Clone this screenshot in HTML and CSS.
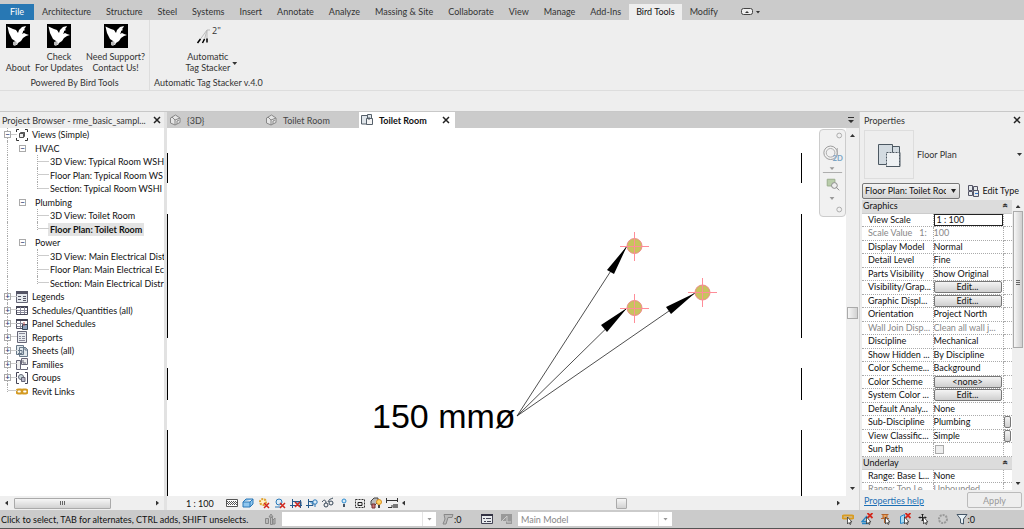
FILE: index.html
```html
<!DOCTYPE html>
<html lang="en">
<head>
<meta charset="utf-8">
<title>Bird Tools - Floor Plan: Toilet Room</title>
<link rel="stylesheet" href="styles.css">
</head>
<body>
<svg class="defs" aria-hidden="true">
  <symbol id="bird" viewBox="0 0 24 24"><path fill="#000" d="M0 0h24v24H0z"/><path fill="#fff" d="M1.500 2.500L7 5l3 1 2 3 1-3 3-3 4-1-1 2-1 1 1 1-2 1v1l-1 2 2-1 2 1 3 1-3 1-3 2-2 3-3 2-1 2H8l1-4-3-2-1-2-1-2-1-2z"/><path fill="#bbb" d="M7 18l3-1 1 3-2 2-2-1z"/></symbol>
  <symbol id="house" viewBox="0 0 12 12"><path fill="#e4e4e4" stroke="#888" d="M1.500 4l5-3 4.500 3v4.500L6 11 1.500 9z"/><path fill="none" stroke="#888" d="M1 5l2-2 3 3v5M6 6l5-2M8 10V7l2-1"/></symbol>
  <symbol id="plan" viewBox="0 0 12 12"><path fill="#dfe5ea" stroke="#56606a" d="M.5 1.500h6V10h-6zM6.500.5h4v4h-4z"/><path fill="#f4f4f4" stroke="#56606a" d="M5.500 4.500h6v6h-6z"/><path stroke="#56606a" stroke-dasharray="1 1" d="M8 3v4"/></symbol>
  <symbol id="close" viewBox="0 0 8 8"><path stroke="#222" stroke-width="1.500" d="M1 1l6 6M7 1L1 7"/></symbol>
  <symbol id="views" viewBox="0 0 12 12"><path fill="none" stroke="#333" d="M3 .5H.5V3M9 .5h2.500V3M3 11.500H.5V9M9 11.500h2.500V9"/><path fill="#eee" stroke="#555" d="M3.500 4.500l1-1h4v4l-1 1h-4zM3.500 4.500h4v4M7.500 4.500l1-1"/></symbol>
  <symbol id="legend" viewBox="0 0 12 12"><path fill="#e6eaee" stroke="#667" d="M.5.500h11v11H.5z"/><path fill="#556" d="M0 0h12v3H0z"/><path stroke="#556" d="M2 5.500h3M7 5.500h3M2 8.500h3M7 7.500h3M7 9.500h3"/></symbol>
  <symbol id="schedule" viewBox="0 0 12 12"><path fill="#fff" stroke="#445" d="M.5 2.500h11v8H.5z"/><path stroke="#445" d="M0 3h12" stroke-width="2"/><path stroke="#889" d="M1 6.500h10M1 8.500h10M4.500 3v7M8.500 3v7"/></symbol>
  <symbol id="panel" viewBox="0 0 12 12"><path fill="#fff" stroke="#556" d="M.5 1.500h11v9H.5z"/><path stroke="#445" stroke-width="2" d="M0 2h12"/><path stroke="#889" d="M1 5.500h6M1 8.500h6M4.500 3v7"/><path fill="#8fa3bd" stroke="#345" d="M6.500 6.500h5v5h-5z"/><path stroke="#b55" d="M8 4v4"/></symbol>
  <symbol id="report" viewBox="0 0 12 12"><path fill="#e9edf0" stroke="#667" d="M1.500.5h9v11h-9z"/><path stroke="#889" d="M3 2.500h6M3 5.500h2M6 5.500h3M3 7.500h2M6 7.500h3M3 9.500h6"/></symbol>
  <symbol id="sheet" viewBox="0 0 12 12"><path fill="#e1e8ec" stroke="#678" d="M.5.5h7v9h-7zM3.500 2.500h6l2 2v7h-8z"/><path fill="none" stroke="#678" d="M9 2v3h3M2 5.500h4v3H2"/></symbol>
  <symbol id="family" viewBox="0 0 12 12"><path fill="#eee" stroke="#667" d="M.5 2.500h4v9h-4zM5.500.5h6v6h-6z"/><path fill="none" stroke="#667" d="M5 11.500h6.500V9M7 2v3h3"/></symbol>
  <symbol id="group" viewBox="0 0 12 12"><path fill="none" stroke="#445" d="M3 .5H.5v11H3M9 .5h2.500v11H9"/><circle cx="5" cy="5" r="2.500" fill="#cdd" stroke="#667"/><path fill="#bbc" stroke="#667" d="M5.500 5.500h3.500v4H5.500z"/></symbol>
  <symbol id="link" viewBox="0 0 12 12"><path fill="none" stroke="#d39a22" stroke-width="2" d="M5 4.500H2.500a1.800 1.800 0 000 4H5L7 4.500h2.500a1.800 1.800 0 010 4H7z"/></symbol>
  <symbol id="cursor" viewBox="0 0 12 12"><path fill="#fff" stroke="#333" stroke-width=".8" d="M5.500 4v7l1.500-1.500 1 2 1-.5-1-2h2z"/></symbol>
  <symbol id="redx" viewBox="0 0 12 12"><path stroke="#d3271c" stroke-width="1.800" d="M6.500 0l5 5M11.500 0l-5 5"/></symbol>
</svg>

<header class="ribbon">
  <nav class="tabs" aria-label="Ribbon tabs">
    <button class="tab file">File</button>
    <button class="tab">Architecture</button>
    <button class="tab">Structure</button>
    <button class="tab">Steel</button>
    <button class="tab">Systems</button>
    <button class="tab">Insert</button>
    <button class="tab">Annotate</button>
    <button class="tab">Analyze</button>
    <button class="tab">Massing &amp; Site</button>
    <button class="tab">Collaborate</button>
    <button class="tab">View</button>
    <button class="tab">Manage</button>
    <button class="tab">Add-Ins</button>
    <button class="tab current">Bird Tools</button>
    <button class="tab">Modify</button>
    <button class="cycle" aria-label="Minimize ribbon"><svg width="20" height="8" viewBox="0 0 20 8"><rect x=".5" y=".5" width="11" height="6" rx="2" fill="#eee" stroke="#444"/><path fill="#333" d="M4 5l2-2 2 2zM15 3h4l-2 2.500z"/></svg></button>
  </nav>
  <div class="groups">
    <section class="group powered">
      <div class="tools">
        <button class="tool about"><svg class="big"><use href="#bird"/></svg><span class="single">About</span></button>
        <button class="tool updates"><svg class="big"><use href="#bird"/></svg><span>Check<br>For Updates</span></button>
        <button class="tool support"><svg class="big"><use href="#bird"/></svg><span>Need Support?<br>Contact Us!</span></button>
      </div>
      <h2>Powered By Bird Tools</h2>
    </section>
    <section class="group stacker">
      <div class="tools">
        <button class="tool tag-tool"><svg class="big" viewBox="0 0 24 24"><path fill="none" stroke="#bbb" d="M14 6h-3L3 17M11 6L8 17M11 6v10"/><path stroke="#000" stroke-width="1.500" d="M1.500 19l3-4M6.500 19l2-4M11 18.500v-4"/><text x="16" y="10" class="inch">2"</text></svg><span>Automatic<br>Tag Stacker</span></button>
        <i class="caret"></i>
      </div>
      <h2>Automatic Tag Stacker v.4.0</h2>
    </section>
  </div>
  <div class="options"></div>
</header>

<main class="work">
  <aside class="browser">
    <div class="title"><span>Project Browser - rme_basic_sampl...</span><button class="x" aria-label="Close browser"><svg><use href="#close"/></svg></button></div>
    <ul class="tree">
      <li class="l0"><b class="box">−</b><svg><use href="#views"/></svg>Views (Simple)</li>
      <li class="l1"><b class="box">−</b>HVAC</li>
      <li class="l2">3D View: Typical Room WSH</li>
      <li class="l2">Floor Plan: Typical Room WS</li>
      <li class="l2 end">Section: Typical Room WSHI</li>
      <li class="l1"><b class="box">−</b>Plumbing</li>
      <li class="l2">3D View: Toilet Room</li>
      <li class="l2 end"><strong>Floor Plan: Toilet Room</strong></li>
      <li class="l1"><b class="box">−</b>Power</li>
      <li class="l2">3D View: Main Electrical Dist</li>
      <li class="l2">Floor Plan: Main Electrical Ec</li>
      <li class="l2 end">Section: Main Electrical Distr</li>
      <li class="l0"><b class="box">+</b><svg><use href="#legend"/></svg>Legends</li>
      <li class="l0"><b class="box">+</b><svg><use href="#schedule"/></svg>Schedules/Quantities (all)</li>
      <li class="l0"><b class="box">+</b><svg><use href="#panel"/></svg>Panel Schedules</li>
      <li class="l0"><b class="box">+</b><svg><use href="#report"/></svg>Reports</li>
      <li class="l0"><b class="box">+</b><svg><use href="#sheet"/></svg>Sheets (all)</li>
      <li class="l0"><b class="box">+</b><svg><use href="#family"/></svg>Families</li>
      <li class="l0"><b class="box">+</b><svg><use href="#group"/></svg>Groups</li>
      <li class="l0 end"><b class="box none"></b><svg><use href="#link"/></svg>Revit Links</li>
    </ul>
    <div class="hbar"><i class="left"></i><span class="thumb grip"></span><i class="right"></i></div>
  </aside>

  <section class="center">
    <div class="doctabs">
      <button class="doc"><svg><use href="#house"/></svg>{3D}</button>
      <button class="doc"><svg><use href="#house"/></svg>Toilet Room</button>
      <button class="doc active"><svg><use href="#plan"/></svg>Toilet Room<svg class="xs"><use href="#close"/></svg></button>
      <svg class="list" viewBox="0 0 8 8"><path fill="#333" d="M1 1h6v1H1zM1 4h6L4 7z"/></svg>
    </div>
    <div class="view">
      <div class="canvas">
        <svg class="drawing" role="img" aria-label="Three tagged pipes">
          <g stroke="#000"><path d="M.5 25v30M.5 86v124M.5 240v32M.5 302v66M634.500 25v30M634.500 86v124M634.500 240v32M634.500 302v66"/></g>
          <g stroke="#222" stroke-width=".8"><path d="M350 288L460 118M350 288L460 180M350 288L528 165"/></g>
          <path d="M460 118l-20 24 7 4zM460 180l-26 17 6 7zM528 165l-29 14 5 7z"/>
          <g fill="#c8c35e" stroke="#f08a8a"><circle cx="467.500" cy="118" r="7.500"/><circle cx="467.500" cy="180" r="7.500"/><circle cx="535.500" cy="164.500" r="7.500"/></g>
          <path stroke="#ff8d98" d="M453 118.500h29M467.500 104v29M453 180.500h29M467.500 166v29M521 164.500h29M535.500 150v29"/>
          <text x="205" y="300" class="tag">150 mmø</text>
        </svg>
        <div class="navbar">
          <svg viewBox="0 0 26 88"><g fill="none" stroke="#aaa"><circle cx="20" cy="5" r="2.500"/><circle cx="20" cy="82" r="2.500"/><circle cx="11" cy="23" r="7" stroke="#999"/><circle cx="11" cy="23" r="4.500"/><path d="M18 18v8M3 43.500h20"/></g><text x="13" y="32" class="two">2D</text><path fill="#999" d="M10 38h5l-2.500 3zM10 69h5l-2.500 3z"/><path fill="#b9cdaa" stroke="#9aad8c" d="M7.500 50.500h8v7h-8z"/><circle cx="15" cy="57" r="3" fill="#eee" stroke="#888"/><path stroke="#888" d="M17 59l3 3"/></svg>
        </div>
      </div>
      <div class="vbar"><i class="up"></i><span class="knob"></span><i class="down"></i></div>
    </div>
    <div class="viewctl">
      <span class="scale">1 : 100</span>
      <div class="ctlicons">
        <svg viewBox="0 0 12 12"><path fill="#fff" stroke="#555" d="M.5 2.500h11v7H.5z"/><path stroke="#555" stroke-dasharray="1 1" d="M1 4.500h10M2 5.500h9M1 6.500h10M2 7.500h9"/></svg>
        <svg viewBox="0 0 12 12"><path fill="#8fc6ee" stroke="#2a78b8" d="M1 5l3-3h7v5l-3 3H1zM1 5h7l3-3M8 5v5"/></svg>
        <svg viewBox="0 0 12 12"><circle cx="5" cy="5" r="3" fill="#fff3c9" stroke="#e0a12e" stroke-width="2" stroke-dasharray="2 1"/><path stroke="#d3271c" stroke-width="1.500" d="M6 6l5 5M11 6l-5 5"/></svg>
        <svg viewBox="0 0 12 12"><circle cx="5" cy="5" r="3" fill="#d9ecf8" stroke="#2a78b8"/><path stroke="#2a78b8" d="M1 10h6"/><path stroke="#d3271c" stroke-width="1.500" d="M6 6l5 5M11 6l-5 5"/></svg>
        <svg viewBox="0 0 12 12"><path stroke="#245a8c" fill="#7fb6df" d="M2.500 2v9M0 8.500h12M3 4.500h8v4M10.500 3v8"/><path stroke="#d3271c" stroke-width="1.500" d="M5 5l5 5M10 5l-5 5"/></svg>
        <svg viewBox="0 0 12 12"><path fill="#7fb6df" stroke="#245a8c" d="M2.500 2v9M0 8.500h7M3 4.500h4v4"/><circle cx="9" cy="5" r="2.200" fill="#d9ecf8" stroke="#2a78b8"/><path stroke="#2a78b8" d="M9 7v3"/></svg>
        <svg viewBox="0 0 12 12"><path fill="none" stroke="#345" d="M0 5c2-3 4-2 4 1M6 5c1-3 3-3 5-4"/><circle cx="4" cy="8" r="2" fill="none" stroke="#345"/><circle cx="9" cy="6" r="2" fill="none" stroke="#345"/></svg>
        <svg viewBox="0 0 12 12"><circle cx="6" cy="4" r="2" fill="#d9ecf8" stroke="#2a8bd0"/><path stroke="#456" stroke-width="2" d="M6 7v3"/></svg>
        <svg viewBox="0 0 12 12"><path fill="#eee" stroke="#333" stroke-dasharray="2 1" d="M1.500 2.500h9v8h-9z"/><path fill="none" stroke="#222" d="M4 5.500h4v3H4z"/></svg>
        <svg viewBox="0 0 12 12"><path fill="#bbb" stroke="#444" d="M1 4l3-3h4v4L5 8H1z"/><path fill="#c77" stroke="#733" d="M2 7h3v4H2z"/><circle cx="9" cy="5" r="2.500" fill="#ffd766" stroke="#d98c1b"/><path stroke="#444" stroke-width="2" d="M9 8v3"/></svg>
        <svg viewBox="0 0 12 12"><path stroke="#333" fill="none" d="M.5 1v5M0 3.500h11M11.500 1v4M2 10.500h4V8"/><path fill="#777" d="M7 7h5v4H7z"/></svg>
      </div>
      <div class="hbar long"><i class="left"></i><span class="thumb"></span><i class="right"></i></div>
    </div>
  </section>

  <aside class="props">
    <div class="title"><span>Properties</span><button class="x" aria-label="Close properties"><svg><use href="#close"/></svg></button></div>
    <div class="type">
      <span class="pic"><svg viewBox="0 0 24 24"><path fill="#d3dbe1" stroke="#4c5862" d="M1.500 1.500h14v20h-14zM15.500 3.500h7v7h-7z"/><path fill="#eef1f3" stroke="#4c5862" stroke-dasharray="2 1" d="M9.500 9.500h13v14h-13z"/><path stroke="#4c5862" d="M9 23.500h14v-14" fill="none"/></svg></span>
      <span class="name">Floor Plan</span><i class="caret"></i>
    </div>
    <div class="pick">
      <select aria-label="Instance"><option>Floor Plan: Toilet Room</option></select>
      <button class="edit"><svg viewBox="0 0 12 12"><path fill="#e4e8eb" stroke="#556" d="M1.500.5h4v5h-4zM6.500 1.500h4v4h-4zM1.500 6.500h4v4h-4zM6.500 5.500h5v6h-5z"/><path stroke="#37c" d="M8 8.500h3"/></svg>Edit Type</button>
    </div>
    <div class="params">
      <table>
        <colgroup><col class="c-name"><col class="c-value"><col></colgroup>
        <thead><tr><th colspan="3">Graphics<span>«</span></th></tr></thead>
        <tbody>
        <tr><td>View Scale</td><td><input class="cell" aria-label="View Scale" value="1 : 100"></td><td></td></tr>
        <tr class="dim"><td>Scale Value &nbsp; 1:</td><td>100</td><td></td></tr>
        <tr><td>Display Model</td><td>Normal</td><td></td></tr>
        <tr><td>Detail Level</td><td>Fine</td><td></td></tr>
        <tr><td>Parts Visibility</td><td>Show Original</td><td></td></tr>
        <tr><td>Visibility/Grap...</td><td><button class="cellbtn">Edit...</button></td><td></td></tr>
        <tr><td>Graphic Displ...</td><td><button class="cellbtn">Edit...</button></td><td></td></tr>
        <tr><td>Orientation</td><td>Project North</td><td></td></tr>
        <tr class="dim"><td>Wall Join Disp...</td><td>Clean all wall j...</td><td></td></tr>
        <tr><td>Discipline</td><td>Mechanical</td><td></td></tr>
        <tr><td>Show Hidden ...</td><td>By Discipline</td><td></td></tr>
        <tr><td>Color Scheme...</td><td>Background</td><td></td></tr>
        <tr><td>Color Scheme</td><td><button class="cellbtn">&lt;none&gt;</button></td><td></td></tr>
        <tr><td>System Color ...</td><td><button class="cellbtn">Edit...</button></td><td></td></tr>
        <tr><td>Default Analy...</td><td>None</td><td></td></tr>
        <tr><td>Sub-Discipline</td><td>Plumbing</td><td><button class="cellbtn" aria-label="Associate Sub-Discipline"></button></td></tr>
        <tr><td>View Classific...</td><td>Simple</td><td><button class="cellbtn" aria-label="Associate View Classification"></button></td></tr>
        <tr><td><label for="sun">Sun Path</label></td><td><input id="sun" type="checkbox"></td><td></td></tr>
        </tbody>
        <thead><tr><th colspan="3">Underlay<span>«</span></th></tr></thead>
        <tbody>
        <tr><td>Range: Base L...</td><td>None</td><td></td></tr>
        <tr class="dim"><td>Range: Top Le...</td><td>Unbounded</td><td></td></tr>
        </tbody>
      </table>
      <div class="vbar side"><i class="up"></i><span class="slab"></span><i class="down"></i></div>
    </div>
    <div class="foot"><a href="#help">Properties help</a><button class="apply" disabled>Apply</button></div>
  </aside>
</main>

<footer class="status">
  <span class="hint">Click to select, TAB for alternates, CTRL adds, SHIFT unselects.</span>
  <svg class="wk" viewBox="0 0 12 12"><path fill="#bbb" stroke="#888" d="M1.500 5.500h3v5h-3zM5 4l2-3 2 3zM6.500 4.500h2v7h-2zM9 7l2-2v6H9z"/></svg>
  <span class="drop"><select aria-label="Workset" disabled><option></option></select><i class="caret"></i></span>
  <svg class="er" viewBox="0 0 12 12"><path fill="#bbb" stroke="#888" d="M2 1.500h9l-1 3H6L4 11H1l2-5z"/></svg><span class="zero">:0</span>
  <svg class="opt" viewBox="0 0 12 12"><path fill="#e8ebee" stroke="#445" d="M.5 1.500h11v9H.5z"/><path stroke="#334" d="M0 2h12" stroke-width="2"/><path stroke="#445" d="M2 5.500h2M5 5.500h5M3 8.500h2M6 8.500h4"/></svg>
  <svg class="pickopt" viewBox="0 0 12 12"><path fill="#999" d="M1 1h11v10H6V8H1z"/><path stroke="#ccc" fill="none" d="M2 8l5-5M7 3v6h4"/></svg>
  <span class="drop"><select aria-label="Design option" disabled><option>Main Model</option></select><i class="caret"></i></span>
  <div class="sel">
    <svg viewBox="0 0 12 12"><path fill="none" stroke="#d99c20" stroke-width="2" d="M6 2.500H2a1.500 1.500 0 000 3h3M6 2.500h4a1.500 1.500 0 010 3H6"/><use href="#cursor"/></svg>
    <svg viewBox="0 0 12 12"><path fill="none" stroke="#2585c7" stroke-width="1.300" d="M6 3L1 8.500h6M1 10.500h6"/><use href="#redx"/><use href="#cursor"/></svg>
    <svg viewBox="0 0 12 12"><path fill="#eda35c" stroke="#b4642b" d="M1.500 1.500h7M3 2v3h4V2M1 5.500h8M4.500 6v4"/><use href="#cursor"/></svg>
    <svg viewBox="0 0 12 12"><path fill="#a8dcf5" stroke="#2585c7" d="M1.500 3.500l4-2v8l-4 1z"/><use href="#redx"/><use href="#cursor"/></svg>
    <svg viewBox="0 0 12 12"><path fill="none" stroke="#222" d="M4.500 1v7M1 4.500h7M3.500 2l1-1 1 1M2 3.500l-1 1 1 1M7 3.500l1 1-1 1M3.500 7l1 1 1-1"/><use href="#cursor"/></svg>
    <svg viewBox="0 0 12 12"><circle cx="6" cy="6" r="4" fill="none" stroke="#999" stroke-width="2" stroke-dasharray="2 1"/></svg>
    <span class="filter"><svg viewBox="0 0 12 12"><path fill="#e9f1f5" stroke="#456" d="M1 1.500h10L7.500 6v5l-3-1V6z"/></svg>:0</span>
  </div>
</footer>
</body>
</html>
```

FILE: styles.css
```css
* { box-sizing: border-box; }
body {
  margin: 0;
  height: 100vh;
  display: flex;
  flex-direction: column;
  overflow: hidden;
  background: #eee;
  color: #111;
  font: 9px/13px Lato, Roboto, sans-serif;
}
button, input, select { font: inherit; color: inherit; margin: 0; }
button { border: 0; padding: 0; background: none; }
svg { flex: none; }
.defs { position: absolute; width: 0; height: 0; }

.tabs {
  display: flex;
  height: 20px;
  padding-top: 4px;
  background: #cbcbcb;
  white-space: nowrap;
}
.tab { padding: 0 7px; margin-right: 1px; color: #333; line-height: 16px; }
.file { width: 34px; background: #2878b4; color: #fff; }
.current { background: #eee; color: #111; }
.cycle { display: flex; align-items: center; margin-left: 15px; }

.groups { display: flex; height: 71px; border-bottom: 1px solid #ddd; color: #333; }
.group { display: flex; flex-direction: column; border-right: 1px solid #ddd; }
.stacker { border: 0; }
.group h2 { margin: 0; font-size: 9px; line-height: 13px; font-weight: 400; text-align: center; }
.tools { display: flex; height: 56px; padding-top: 4px; justify-content: center; }
.tool { display: flex; flex-direction: column; align-items: center; line-height: 11px; white-space: nowrap; }
.tool span { margin-top: 3px; }
.tool .single { padding-top: 11px; }
.about { width: 36px; }
.updates { width: 46px; }
.support { width: 67px; }
.tag-tool { margin-left: 6px; }
.stacker { padding: 0 4px; }
.big { width: 24px; height: 24px; overflow: visible; }
.inch { font: 9px "Open Sans", sans-serif; fill: #333; }
.caret { width: 5px; height: 3px; background: #333; clip-path: polygon(0 0, 100% 0, 50% 100%); }
.tools .caret { margin: 38px 0 0 2px; }
.options { height: 21px; border-bottom: 1px solid #c8c8c8; }

.work { flex: 1; min-height: 0; display: grid; grid-template: minmax(0, 1fr) / 167px minmax(0, 1fr) 165px; }
.title {
  flex: none;
  display: flex;
  align-items: center;
  justify-content: space-between;
  height: 16px;
  padding: 0 3px 0 2px;
  background: #eee;
  color: #333;
  white-space: nowrap;
}
.x { display: flex; }
.x svg, .xs { width: 8px; height: 8px; }

.browser { display: flex; flex-direction: column; min-width: 0; background: #fff; border-right: 3px solid #e2e2e2; }
.tree { flex: 1; min-height: 0; margin: 0; padding: 0; list-style: none; overflow: hidden; white-space: nowrap; }
.tree li { position: relative; display: flex; align-items: center; height: 13px; }
.tree li:nth-child(even) { height: 14px; }
.tree svg { width: 12px; height: 12px; margin: 0 4px 0 5px; }
.l0 { padding-left: 4px; }
.l1 { padding-left: 19px; }
.l2 { padding-left: 50px; }
.l1 .box { margin-right: 9px; }
.box {
  z-index: 1;
  display: flex;
  align-items: center;
  justify-content: center;
  width: 7px;
  height: 7px;
  border: 1px solid #aaa;
  background: #fff;
  color: #347;
  font-size: 8px;
  line-height: 5px;
}
.none { visibility: hidden; }
.tree li::before, .l2::after { content: ""; position: absolute; top: 0; bottom: 0; left: 7px; border-left: 1px dotted #aaa; }
.tree li::before { width: 9px; }
.tree .l0::before { background: linear-gradient(#ccc, #ccc) 0 6px / 100% 1px no-repeat; }
.l2::after { left: 37px; width: 11px; background: linear-gradient(#ccc, #ccc) 0 6px / 100% 1px no-repeat; }
.l2.end::after, .tree .l0.end::before { bottom: 6px; }
.tree strong { margin-left: -2px; padding: 0 2px; background: #e3e3e3; line-height: 13px; }

.hbar { flex: none; display: flex; align-items: center; height: 14px; padding: 0 5px; background: #efefef; }
.left, .right, .up, .down { flex: none; width: 5px; height: 5px; background: #333; }
.left { width: 3px; clip-path: polygon(100% 0, 100% 100%, 0 50%); }
.right { width: 3px; margin-left: auto; clip-path: polygon(0 0, 0 100%, 100% 50%); }
.up { height: 3px; clip-path: polygon(0 100%, 100% 100%, 50% 0); }
.down { height: 3px; margin-top: auto; clip-path: polygon(0 0, 100% 0, 50% 100%); }
.thumb { width: 97px; height: 11px; margin-left: 6px; border: 1px solid #aaa; border-radius: 1px; background: linear-gradient(#f6f6f6, #d2d2d2); }
.grip { display: flex; align-items: center; justify-content: center; }
.grip::before { content: ""; width: 6px; height: 4px; background: repeating-linear-gradient(90deg, #666 0 1px, transparent 1px 2px); }

.center { display: flex; flex-direction: column; min-width: 0; }
.doctabs { flex: none; display: flex; height: 16px; background: #cbcbcb; }
.doc { display: flex; align-items: center; width: 96px; padding-left: 2px; color: #444; white-space: nowrap; }
.doc svg { width: 12px; height: 12px; margin-right: 6px; }
.doc.active { background: #fff; color: #111; font-weight: 700; }
.doc .xs { width: 8px; height: 8px; margin: 0 5px 0 auto; }
.doctabs .list { width: 8px; height: 8px; margin: 4px 4px 0 auto; }
.view { flex: 1; min-height: 0; display: flex; background: #fff; }
.canvas { position: relative; flex: 1; overflow: hidden; }
.drawing { display: block; width: 100%; height: 100%; }
.tag { font: 34px "Liberation Sans", Arial, sans-serif; }
.navbar { position: absolute; top: 1px; right: 0; width: 27px; height: 88px; border: 1px solid #ccc; border-radius: 4px; background: #f1f1f1; }
.navbar svg { width: 25px; height: 86px; }
.two { font: 700 8px Lato, sans-serif; fill: #7ba4c4; }
.vbar { display: flex; flex-direction: column; align-items: center; width: 13px; padding: 6px 0; background: #efefef; }
.knob { width: 11px; height: 12px; margin-top: 170px; border: 1px solid #aaa; background: linear-gradient(90deg, #f6f6f6, #d2d2d2); }
.viewctl { flex: none; display: flex; align-items: center; height: 14px; background: #f0f0f0; }
.scale { width: 59px; padding-left: 19px; white-space: nowrap; }
.ctlicons { display: flex; gap: 4px; width: 172px; }
.ctlicons svg { width: 12px; height: 12px; }
.long { flex: 1; padding: 0 19px 0 4px; }
.long .thumb { width: 11px; margin: 0 auto; }
.long .right { margin: 0; }

.props { display: flex; flex-direction: column; min-width: 0; padding-left: 2px; border-left: 1px solid #d4d4d4; background: #eee; }
.type { flex: none; display: flex; align-items: center; height: 53px; padding: 2px 2px 2px 2px; color: #333; }
.pic { display: flex; align-items: center; justify-content: center; width: 50px; height: 49px; border: 1px solid #ddd; }
.pic svg { width: 24px; height: 24px; }
.name { flex: 1; padding-left: 3px; }
.pick { flex: none; position: relative; display: flex; align-items: center; justify-content: space-between; height: 19px; padding-right: 5px; white-space: nowrap; }
.pick select {
  appearance: none;
  width: 98px;
  height: 16px;
  padding: 0 13px 0 2px;
  border: 1px solid #777;
  border-radius: 2px;
  background: linear-gradient(#f4f4f4, #d3d3d3);
}
.pick::before { content: ""; position: absolute; left: 89px; top: 8px; width: 5px; height: 4px; background: #222; clip-path: polygon(0 0, 100% 0, 50% 100%); }
.edit { display: flex; align-items: center; gap: 4px; }
.edit svg { width: 12px; height: 12px; }
.params { flex: 1; min-height: 0; display: flex; overflow: hidden; }
table { flex: 1; align-self: flex-start; table-layout: fixed; width: 150px; border-collapse: collapse; background: #fff; white-space: nowrap; }
.c-name { width: 71px; }
.c-value { width: 70px; }
tr { height: 13px; }
tbody tr:nth-child(even) { height: 14px; }
th, td { height: inherit; padding: 0; font-weight: 400; line-height: 12px; text-align: left; overflow: hidden; }
th { padding: 0 3px 0 1px; background: #dcdcdc; border-bottom: 1px solid #ccc; }
th span { float: right; font-size: 11px; font-weight: 700; line-height: 11px; transform: rotate(90deg); }
td { border: 1px dotted #aaa; border-width: 0 1px 1px 0; }
td:first-child { padding-left: 6px; }
td:nth-child(2) { padding-left: 0; }
td:last-child { border-right: 0; }
.dim { color: #888; }
.cell { display: block; width: 69px; height: 12px; padding: 0 2px; border: 1px solid #222; background: #fff; }
.cellbtn {
  display: block;
  width: 68px;
  height: 12px;
  border: 1px solid #777;
  border-radius: 2px;
  background: linear-gradient(#f4f4f4, #cfcfcf);
  line-height: 10px;
}
td:last-child .cellbtn { width: 7px; }
input[type="checkbox"] { display: block; appearance: none; width: 9px; height: 9px; margin-left: 1px; border: 1px solid #aaa; background: #eee; }
.side { width: 12px; padding: 5px 0; }
.slab { position: relative; width: 10px; height: 137px; margin-top: 3px; border: 1px solid #aaa; background: linear-gradient(90deg, #f6f6f6, #cfcfcf); }
.slab::before { content: ""; position: absolute; left: 2px; top: 50%; width: 4px; height: 6px; background: repeating-linear-gradient(#666 0 1px, transparent 1px 2px); }
.foot { flex: none; display: flex; align-items: center; justify-content: space-between; height: 20px; padding: 0 2px; }
.foot a { color: #1c6fb5; }
.apply { width: 55px; height: 16px; border: 1px solid #bbb; border-radius: 2px; color: #999; }

.status { flex: none; display: flex; align-items: center; height: 19px; border-bottom: 1px solid #555; background: #cbcbcb; white-space: nowrap; }
.status svg { width: 12px; height: 12px; }
.hint { width: 264px; padding-left: 1px; }
.drop { display: flex; align-items: center; width: 154px; height: 14px; margin: 0 6px; background: #fff; }
.drop select { appearance: none; flex: 1; min-width: 0; height: 14px; padding: 0 3px; border: 0; border-right: 1px solid #e4e4e4; background: none; color: #888; opacity: 1; }
.drop .caret { margin: 0 4px; background: #999; }
.zero { width: 27px; }
.status .pickopt { margin-left: 7px; }
.sel { display: flex; align-items: center; gap: 7px; margin: 0 49px 0 auto; }
.filter { display: flex; align-items: center; }
```
